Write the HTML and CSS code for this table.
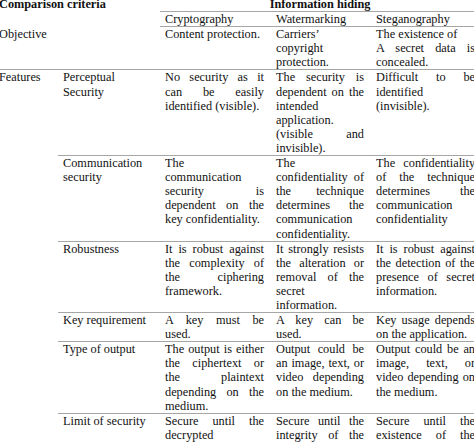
FILE: index.html
```html
<!DOCTYPE html>
<html>
<head>
<meta charset="utf-8">
<link rel="stylesheet" href="styles.css">
</head>
<body>
<table class="grid">
  <colgroup>
    <col class="c1"><col class="c2"><col class="c3"><col class="c4"><col class="c5">
  </colgroup>
  <thead>
    <tr>
      <th class="crit" colspan="2" rowspan="2">Comparison criteria</th>
      <th class="group rule" colspan="3">Information hiding</th>
    </tr>
    <tr class="rule">
      <td>Cryptography</td>
      <td>Watermarking</td>
      <td>Steganography</td>
    </tr>
  </thead>
  <tbody>
    <tr class="rule">
      <td colspan="2">Objective</td>
      <td><span class="ln">Content protection.</span></td>
      <td><span class="ln">Carriers’</span><span class="ln">copyright</span><span class="ln">protection.</span></td>
      <td><span class="ln">The existence of</span><span class="j">A secret data is</span><span class="ln">concealed.</span></td>
    </tr>
    <tr class="rule">
      <td class="feat" rowspan="6">Features</td>
      <td><span class="ln">Perceptual</span><span class="ln">Security</span></td>
      <td><span class="j">No security as it</span><span class="j">can be easily</span><span class="ln">identified (visible).</span></td>
      <td><span class="j">The security is</span><span class="j">dependent on the</span><span class="ln">intended</span><span class="ln">application.</span><span class="j">(visible and</span><span class="ln">invisible).</span></td>
      <td><span class="j">Difficult to be</span><span class="ln">identified</span><span class="ln">(invisible).</span></td>
    </tr>
    <tr class="rule">
      <td><span class="ln">Communication</span><span class="ln">security</span></td>
      <td><span class="ln">The</span><span class="ln">communication</span><span class="j">security is</span><span class="j">dependent on the</span><span class="ln">key confidentiality.</span></td>
      <td><span class="ln">The</span><span class="j">confidentiality of</span><span class="j">the technique</span><span class="j">determines the</span><span class="ln">communication</span><span class="ln">confidentiality.</span></td>
      <td><span class="j">The confidentiality</span><span class="j">of the technique</span><span class="j">determines the</span><span class="ln">communication</span><span class="ln">confidentiality</span></td>
    </tr>
    <tr class="rule">
      <td><span class="ln">Robustness</span></td>
      <td><span class="j">It is robust against</span><span class="j">the complexity of</span><span class="j">the ciphering</span><span class="ln">framework.</span></td>
      <td><span class="j">It strongly resists</span><span class="j">the alteration or</span><span class="j">removal of the</span><span class="ln">secret</span><span class="ln">information.</span></td>
      <td><span class="j">It is robust against</span><span class="j">the detection of the</span><span class="j">presence of secret</span><span class="ln">information.</span></td>
    </tr>
    <tr class="rule">
      <td><span class="ln">Key requirement</span></td>
      <td><span class="j">A key must be</span><span class="ln">used.</span></td>
      <td><span class="j">A key can be</span><span class="ln">used.</span></td>
      <td><span class="j">Key usage depends</span><span class="ln">on the application.</span></td>
    </tr>
    <tr class="rule">
      <td><span class="ln">Type of output</span></td>
      <td><span class="j">The output is either</span><span class="j">the ciphertext or</span><span class="j">the plaintext</span><span class="j">depending on the</span><span class="ln">medium.</span></td>
      <td><span class="j">Output could be</span><span class="j">an image, text, or</span><span class="j">video depending</span><span class="ln">on the medium.</span></td>
      <td><span class="j">Output could be an</span><span class="j">image, text, or</span><span class="j">video depending on</span><span class="ln">the medium.</span></td>
    </tr>
    <tr>
      <td><span class="ln">Limit of security</span></td>
      <td><span class="j">Secure until the</span><span class="ln">decrypted</span></td>
      <td><span class="j">Secure until the</span><span class="j">integrity of the</span></td>
      <td><span class="j">Secure until the</span><span class="j">existence of the</span></td>
    </tr>
  </tbody>
</table>
</body>
</html>
```

FILE: styles.css
```css
html, body {
  margin: 0;
  padding: 0;
  background: #ffffff;
  overflow: hidden;
}

.grid {
  border-collapse: collapse;
  table-layout: fixed;
  width: 488px;
  margin: -3px 0 0 -6px;
  font-family: "Liberation Serif", "Times New Roman", serif;
  font-size: 12.3px;
  line-height: 14.1px;
  color: #111111;
}

.c1 { width: 64px; }
.c2 { width: 102px; }
.c3 { width: 111px; }
.c4 { width: 100px; }
.c5 { width: 111px; }

.grid th,
.grid td {
  padding: 0 7px 0 5px;
  vertical-align: top;
  text-align: left;
  font-weight: normal;
}

.grid th.crit {
  font-weight: bold;
}

.grid th.group {
  font-weight: bold;
  text-align: center;
}

.rule > td,
th.rule {
  border-bottom: 1px solid #a6a6a6;
}

.grid td.feat {
  border-bottom: none;
}

.ln {
  display: block;
}

.j {
  display: block;
  text-align: justify;
  text-align-last: justify;
}
```
